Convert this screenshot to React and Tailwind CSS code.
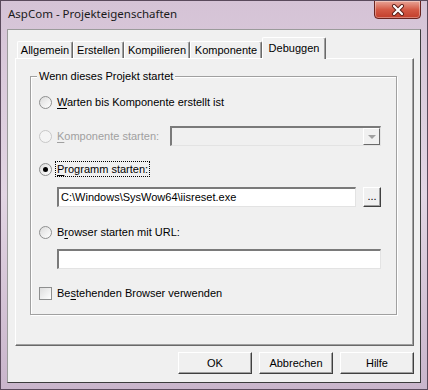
import React from "react";

const tabs = [
  { label: "Allgemein", w: "w-[56px]" },
  { label: "Erstellen", w: "w-[51px]" },
  { label: "Kompilieren", w: "w-[66px]" },
  { label: "Komponente", w: "w-[72px]" },
];

const Radio = ({ checked, disabled }) => (
  <div
    className={`w-[13px] h-[13px] rounded-full border flex items-center justify-center shrink-0 ${
      disabled
        ? "border-[#c8c8c8] bg-[#f4f4f4]"
        : "border-[#8e8f8f] bg-gradient-to-br from-[#dcdcdc] to-white"
    }`}
  >
    {checked && <div className="w-[5px] h-[5px] rounded-full bg-black" />}
  </div>
);

const Sunken = ({ className, children }) => (
  <div
    className={`h-[20px] bg-white border-t-2 border-l-2 border-t-[#7a7a7a] border-l-[#7a7a7a] border-b border-r border-b-[#e3e3e3] border-r-[#e3e3e3] flex items-center ${className}`}
  >
    {children}
  </div>
);

const Button = ({ children }) => (
  <button className="w-[74px] h-[22px] bg-[#f0f0f0] border border-t-white border-l-white border-r-[#404040] border-b-[#404040] shadow-[inset_-1px_-1px_0_#a0a0a0] text-[11px] text-black">
    {children}
  </button>
);

export default function App() {
  return (
    <div className="w-[428px] h-[390px] flex flex-col bg-gradient-to-b from-[#d5c3d6] via-[#e2d5e3] to-[#c9b5cb] border border-[#5a4a5c] font-['Liberation_Sans',Arial,sans-serif] text-black overflow-hidden">
      <div className="h-[28px] flex items-start shrink-0">
        <span className="ml-[7px] mt-[7px] text-[11.5px] font-['Noto_Sans',sans-serif] text-[#1a1a1a] leading-none">
          AspCom - Projekteigenschaften
        </span>
        <div className="ml-auto mr-[6px] w-[47px] h-[19px] -mt-px rounded-b-[4px] border border-[#6a2420] bg-gradient-to-b from-[#e7a497] via-[#d45a46] to-[#c23d2b] flex items-center justify-center shadow-[inset_0_0_0_1px_rgba(255,255,255,0.35)]">
          <svg width="14" height="12" viewBox="0 0 14 12">
            <path d="M3 2 L11 10 M11 2 L3 10" stroke="#5a1e18" strokeWidth="4" strokeLinecap="round" />
            <path d="M3 2 L11 10 M11 2 L3 10" stroke="#ffffff" strokeWidth="2.2" strokeLinecap="round" />
          </svg>
        </div>
      </div>

      <div className="mx-[6px] h-[354px] bg-[#f0f0f0] border border-t-[#9b9b9b] border-l-[#9b9b9b] border-r-[#3c3c3c] border-b-[#3c3c3c] flex flex-col text-[11px]">
        <div className="h-[28px] pl-[9px] flex items-end shrink-0">
          {tabs.map((t) => (
            <div
              key={t.label}
              className={`${t.w} h-[17px] border-t border-l border-t-white border-l-white border-r border-r-[#696969] shadow-[inset_-1px_0_0_#a0a0a0] rounded-t-[2px] flex items-center justify-center`}
            >
              {t.label}
            </div>
          ))}
          <div className="w-[64px] h-[22px] -mb-px relative z-10 bg-[#f0f0f0] border-t border-l border-t-white border-l-white border-r border-r-[#696969] shadow-[inset_-1px_0_0_#a0a0a0] rounded-t-[2px] flex items-start justify-center pt-[2px]">
            Debuggen
          </div>
        </div>

        <div className="ml-[7px] w-[399px] h-[288px] shrink-0 border border-t-white border-l-white border-r-[#696969] border-b-[#696969] shadow-[inset_-1px_-1px_0_#a0a0a0]">
          <div className="relative ml-[14px] mt-[17px] w-[367px] h-[239px] border border-[#a0a0a0] shadow-[inset_1px_1px_0_white,1px_1px_0_white] pl-[8px] pr-[15px] flex flex-col">
            <span className="absolute -top-[8px] left-[6px] px-[2px] bg-[#f0f0f0] leading-[14px]">
              Wenn dieses Projekt startet
            </span>

            <div className="mt-[17px] h-[16px] flex items-center gap-[5px]">
              <Radio />
              <span>
                <span className="underline underline-offset-2">W</span>arten bis Komponente erstellt ist
              </span>
            </div>

            <div className="mt-[16px] h-[20px] flex items-center gap-[5px]">
              <Radio disabled />
              <span className="text-[#a0a0a0]">
                <span className="underline underline-offset-2">K</span>omponente starten:
              </span>
              <div className="ml-auto w-[211px] h-[20px] bg-[#f0f0f0] border-t-2 border-l-2 border-t-[#7a7a7a] border-l-[#7a7a7a] border-b border-r border-b-[#e3e3e3] border-r-[#e3e3e3] flex justify-end">
                <div className="w-[17px] h-full border border-t-white border-l-white border-r-[#696969] border-b-[#696969] flex items-center justify-center">
                  <div className="w-0 h-0 border-l-[4px] border-r-[4px] border-t-[4px] border-l-transparent border-r-transparent border-t-[#a0a0a0]" />
                </div>
              </div>
            </div>

            <div className="mt-[15px] h-[16px] flex items-center gap-[4px]">
              <Radio checked />
              <span className="outline-1 outline-dotted outline-black px-px leading-[14px]">
                <span className="underline underline-offset-2">P</span>rogramm starten:
              </span>
            </div>

            <div className="mt-[10px] ml-[18px] flex items-center gap-[7px]">
              <Sunken className="w-[299px] pl-[2px]">C:\Windows\SysWow64\iisreset.exe</Sunken>
              <div className="w-[18px] h-[20px] border border-t-white border-l-white border-r-[#404040] border-b-[#404040] shadow-[inset_-1px_-1px_0_#a0a0a0] flex items-center justify-center pb-[2px]">
                ...
              </div>
            </div>

            <div className="mt-[17px] h-[16px] flex items-center gap-[5px]">
              <Radio />
              <span>
                B<span className="underline underline-offset-2">r</span>owser starten mit URL:
              </span>
            </div>

            <Sunken className="mt-[9px] ml-[18px] w-[324px]" />

            <div className="mt-[16px] h-[16px] flex items-center gap-[5px]">
              <div className="w-[13px] h-[13px] border border-[#8e8f8f] bg-gradient-to-br from-[#dedede] to-white shrink-0" />
              <span>
                Be<span className="underline underline-offset-2">s</span>tehenden Browser verwenden
              </span>
            </div>
          </div>
        </div>

        <div className="mt-[6px] pr-[6px] flex justify-end gap-[7px]">
          <Button>OK</Button>
          <Button>Abbrechen</Button>
          <Button>Hilfe</Button>
        </div>
      </div>
    </div>
  );
}
